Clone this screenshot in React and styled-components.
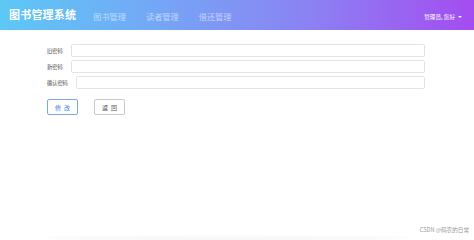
import React from "react";
import styled, { createGlobalStyle } from "styled-components";

const GlobalStyle = createGlobalStyle`
    html, body {
        margin: 0;
        padding: 0;
        background: #ffffff;
        font-family: "Noto Sans CJK SC", "Noto Sans", sans-serif;
    }
    #root {
        width: 474px;
        height: 240px;
        overflow: hidden;
    }
`

const Page = styled.div`
    position: relative;
    width: 474px;
    height: 240px;
    display: flex;
    flex-direction: column;
`

const Header = styled.div`
    height: 30px;
    flex: 0 0 30px;
    display: flex;
    align-items: center;
    padding: 0 12px 0 9px;
    background: linear-gradient(90deg, #5cc8f6 0%, #72aaf6 30%, #8b82f3 65%, #a44cf0 100%);
`

const Title = styled.div`
    color: #ffffff;
    font-size: 11px;
    font-weight: 700;
    letter-spacing: 0.2px;
    margin-right: 17px;
    margin-top: -2px;
`

const Nav = styled.div`
    display: flex;
    gap: 20px;
    flex: 1;
`

const NavItem = styled.span`
    color: rgba(255, 255, 255, 0.55);
    font-size: 8.2px;
    margin-top: 1px;
`

const User = styled.div`
    color: #ffffff;
    font-size: 5.6px;
    display: flex;
    align-items: center;
    gap: 2px;
    margin-top: 3px;
`

const Caret = styled.span`
    display: inline-block;
    width: 0;
    height: 0;
    border-left: 2px solid transparent;
    border-right: 2px solid transparent;
    border-top: 2px solid #ffffff;
    margin-left: 1px;
`

const Form = styled.div`
    display: flex;
    flex-direction: column;
    gap: 3px;
    padding: 14px 49px 0 47px;
`

const Row = styled.div`
    display: flex;
    align-items: center;
    gap: 8px;
`

const Label = styled.label`
    font-size: 5.2px;
    color: #444;
    white-space: nowrap;
`

const Input = styled.input`
    flex: 1;
    height: 13px;
    box-sizing: border-box;
    border: 1px solid #e3e3e3;
    border-radius: 2px;
    outline: none;
    padding: 0;
    background: #fff;
`

const Buttons = styled.div`
    display: flex;
    gap: 16px;
    padding: 10px 0 0 47px;
`

const Button = styled.button`
    width: 31px;
    height: 16px;
    box-sizing: border-box;
    padding: 0;
    background: #fff;
    border: 1px solid ${p => (p.$primary ? "#7aa7ec" : "#c9c9c9")};
    color: ${p => (p.$primary ? "#3b7ee0" : "#555")};
    border-radius: 2px;
    font-size: 6px;
    font-family: inherit;
    letter-spacing: 3px;
    text-indent: 3px;
`

const Footer = styled.div`
    margin-top: auto;
    height: 12px;
    display: flex;
    align-items: flex-start;
    justify-content: flex-end;
    padding-right: 5px;
`

const Shade = styled.div`
    position: absolute;
    left: 45px;
    right: 64px;
    bottom: 0;
    height: 5px;
    background: linear-gradient(180deg, rgba(0, 0, 0, 0) 0%, rgba(0, 0, 0, 0.05) 100%);
    border-radius: 50%;
    filter: blur(1px);
`

const Watermark = styled.span`
    font-size: 5.6px;
    color: #9a9a9a;
    margin-top: -2px;
`

export default function App() {
    return (
        <>
            <GlobalStyle />
            <Page>
                <Header>
                    <Title>图书管理系统</Title>
                    <Nav>
                        <NavItem>图书管理</NavItem>
                        <NavItem>读者管理</NavItem>
                        <NavItem>借还管理</NavItem>
                    </Nav>
                    <User>管理员, 您好<Caret /></User>
                </Header>
                <Form>
                    <Row>
                        <Label>旧密码</Label>
                        <Input type="password" />
                    </Row>
                    <Row>
                        <Label>新密码</Label>
                        <Input type="password" />
                    </Row>
                    <Row>
                        <Label>确认密码</Label>
                        <Input type="password" />
                    </Row>
                </Form>
                <Buttons>
                    <Button $primary>修改</Button>
                    <Button>返回</Button>
                </Buttons>
                <Footer>
                    <Watermark>CSDN @码农的日常</Watermark>
                </Footer>
                <Shade />
            </Page>
        </>
    );
}
